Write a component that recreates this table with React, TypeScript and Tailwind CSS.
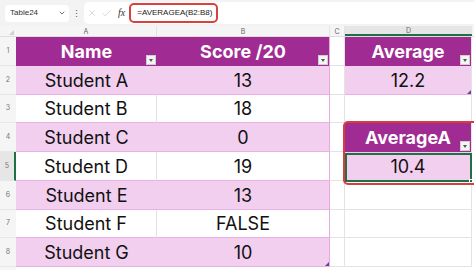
import { ChevronDown, X, Check } from "lucide-react";

type Kind = "head" | "pink" | "white" | "empty";

const PURPLE = "bg-[#a02b93]";

// widths of the sheet columns
const W = { num: "w-[16px]", a: "w-[141px]", b: "w-[173px]", c: "w-[15px]", d: "w-[127px]" };

const ROWS: { n: number; h: string; a: string; b: string; ab: Kind; d: string; dk: Kind }[] = [
  { n: 1, h: "h-[29px]", a: "Name", b: "Score /20", ab: "head", d: "Average", dk: "head" },
  { n: 2, h: "h-[29px]", a: "Student A", b: "13", ab: "pink", d: "12.2", dk: "pink" },
  { n: 3, h: "h-[28px]", a: "Student B", b: "18", ab: "white", d: "", dk: "empty" },
  { n: 4, h: "h-[29px]", a: "Student C", b: "0", ab: "pink", d: "AverageA", dk: "head" },
  { n: 5, h: "h-[29px]", a: "Student D", b: "19", ab: "white", d: "10.4", dk: "pink" },
  { n: 6, h: "h-[29px]", a: "Student E", b: "13", ab: "pink", d: "", dk: "empty" },
  { n: 7, h: "h-[28px]", a: "Student F", b: "FALSE", ab: "white", d: "", dk: "empty" },
  { n: 8, h: "h-[29px]", a: "Student G", b: "10", ab: "pink", d: "", dk: "empty" },
];

const Dropdown = () => (
  <span className="absolute right-[1px] bottom-[1px] w-[10px] h-[10px] bg-[#f4f4f4] border border-[#cfcfcf] flex items-center justify-center">
    <span className="w-0 h-0 border-l-[2.5px] border-r-[2.5px] border-t-[3px] border-l-transparent border-r-transparent border-t-[#555]" />
  </span>
);

const Corner = () => (
  <span className="absolute right-0 bottom-0 w-0 h-0 border-l-[4px] border-t-[4px] border-l-transparent border-t-transparent border-r-0 border-b-[4px] border-b-[#5b4a8a]" />
);

const Cell = ({ w, kind, text, drop, gridRight, corner }: { w: string; kind: Kind; text: string; drop?: boolean; gridRight?: string; corner?: boolean }) => {
  const base = `${w} h-full relative flex items-center justify-center shrink-0`;
  if (kind === "head")
    return (
      <div className={`${base} ${PURPLE} text-white font-bold text-[18px] ${gridRight ?? ""}`}>
        <span className="-mt-[1px]">{text}</span>
        {drop && <Dropdown />}
      </div>
    );
  if (kind === "empty")
    return <div className={`${base} bg-white border-b border-[#e3e3e3] ${gridRight ?? "border-r border-r-[#e3e3e3]"}`} />;
  return (
    <div
      className={`${base} ${kind === "pink" ? "bg-[#f2ceef]" : "bg-white"} border-b border-b-[#eab2e4] text-[18px] text-[#111] ${gridRight ?? ""}`}
    >
      {text}
      {corner && <Corner />}
    </div>
  );
};

export default function App() {
  return (
    <div className="w-[474px] h-[270px] overflow-hidden bg-white relative" style={{ fontFamily: "Inter, 'Noto Sans', sans-serif" }}>
      {/* formula bar */}
      <div className="h-[26px] bg-[#f3f3f3] flex items-center">
        <div className="ml-[5px] w-[64px] h-[17px] bg-white rounded-[4px] flex items-center justify-between pl-[5px] pr-[3px] text-[8px] text-[#333]" style={{ fontFamily: "'Liberation Sans', Arial, sans-serif" }}>
          Table24
          <ChevronDown className="w-[8px] h-[8px] text-[#444]" strokeWidth={2.2} />
        </div>
        <span className="w-[15px] text-center text-[9px] text-[#555] leading-none">⋮</span>
        <div className="flex-1 h-[22px] bg-white rounded-l-[5px] flex items-center pl-[3px]">
          <X className="w-[10px] h-[10px] text-[#c4c4c4]" strokeWidth={1.5} />
          <Check className="w-[11px] h-[11px] ml-[4px] text-[#c4c4c4]" strokeWidth={1.5} />
          <span className="ml-[6px] text-[10px] italic text-[#333] leading-none" style={{ fontFamily: "'Liberation Serif', serif" }}>
            fx
          </span>
          <div className="ml-[4px] w-[89px] h-[20px] border-2 border-[#d8413e] rounded-[5px] flex items-center pl-[6px] text-[8px] text-[#222]" style={{ fontFamily: "'Liberation Sans', Arial, sans-serif" }}>
            =AVERAGEA(B2:B8)
          </div>
        </div>
      </div>

      {/* column headers */}
      <div className="h-[11px] flex bg-[#f5f5f5] border-b border-[#dedede] text-[7px] text-[#666] leading-none">
        <div className={`${W.num} h-full relative`}>
          <span className="absolute right-[2px] bottom-[1px] w-0 h-0 border-l-[5px] border-t-[5px] border-l-transparent border-t-transparent border-b-0 border-r-[5px] border-r-[#d0d0d0]" />
        </div>
        <div className={`${W.a} flex items-center justify-center border-r border-[#e3e3e3]`}>A</div>
        <div className={`${W.b} flex items-center justify-center border-r border-[#e3e3e3]`}>B</div>
        <div className={`${W.c} flex items-center justify-center border-r border-[#e3e3e3]`}>C</div>
        <div className={`${W.d} flex items-center justify-center bg-[#e6e6e6] border-b-2 border-[#1e7145]`}>D</div>
      </div>

      {/* sheet rows */}
      {ROWS.map((r) => (
        <div key={r.n} className={`${r.h} flex`}>
          <div
            className={`${W.num} h-full flex items-center justify-center text-[7px] text-[#777] border-b border-[#e6e6e6] ${
              r.n === 5 ? "bg-[#e6e6e6] border-r-2 border-r-[#1e7145]" : "bg-[#f5f5f5]"
            }`}
          >
            {r.n}
          </div>
          <Cell w={W.a} kind={r.ab} text={r.a} drop={r.ab === "head"} gridRight={r.ab === "white" ? "border-r border-r-[#e3e3e3]" : ""} />
          <Cell w={W.b} kind={r.ab} text={r.b} drop={r.ab === "head"} gridRight="border-r border-r-[#e7a9df]" corner={r.n === 8} />
          <Cell w={W.c} kind="empty" text="" />
          <Cell w={W.d} kind={r.dk} text={r.d} drop={r.dk === "head"} corner={r.n === 2} gridRight={r.dk === "empty" ? undefined : "border-r border-r-[#e3e3e3]"} />
        </div>
      ))}
      <div className="h-[4px] flex">
        <div className={`${W.num} bg-[#f5f5f5]`} />
      </div>

      {/* selection on D5 */}
      <div className="absolute left-[345px] top-[153px] w-[127px] h-[29px] border-2 border-[#1e7145]">
        <span className="absolute -right-[3px] -bottom-[3px] w-[4px] h-[4px] bg-[#1e7145] border border-white" />
      </div>
      {/* red annotation box */}
      <div className="absolute left-[343px] top-[121px] w-[135px] h-[64px] border-2 border-[#dc3b3b] rounded-[5px]" />
    </div>
  );
}
